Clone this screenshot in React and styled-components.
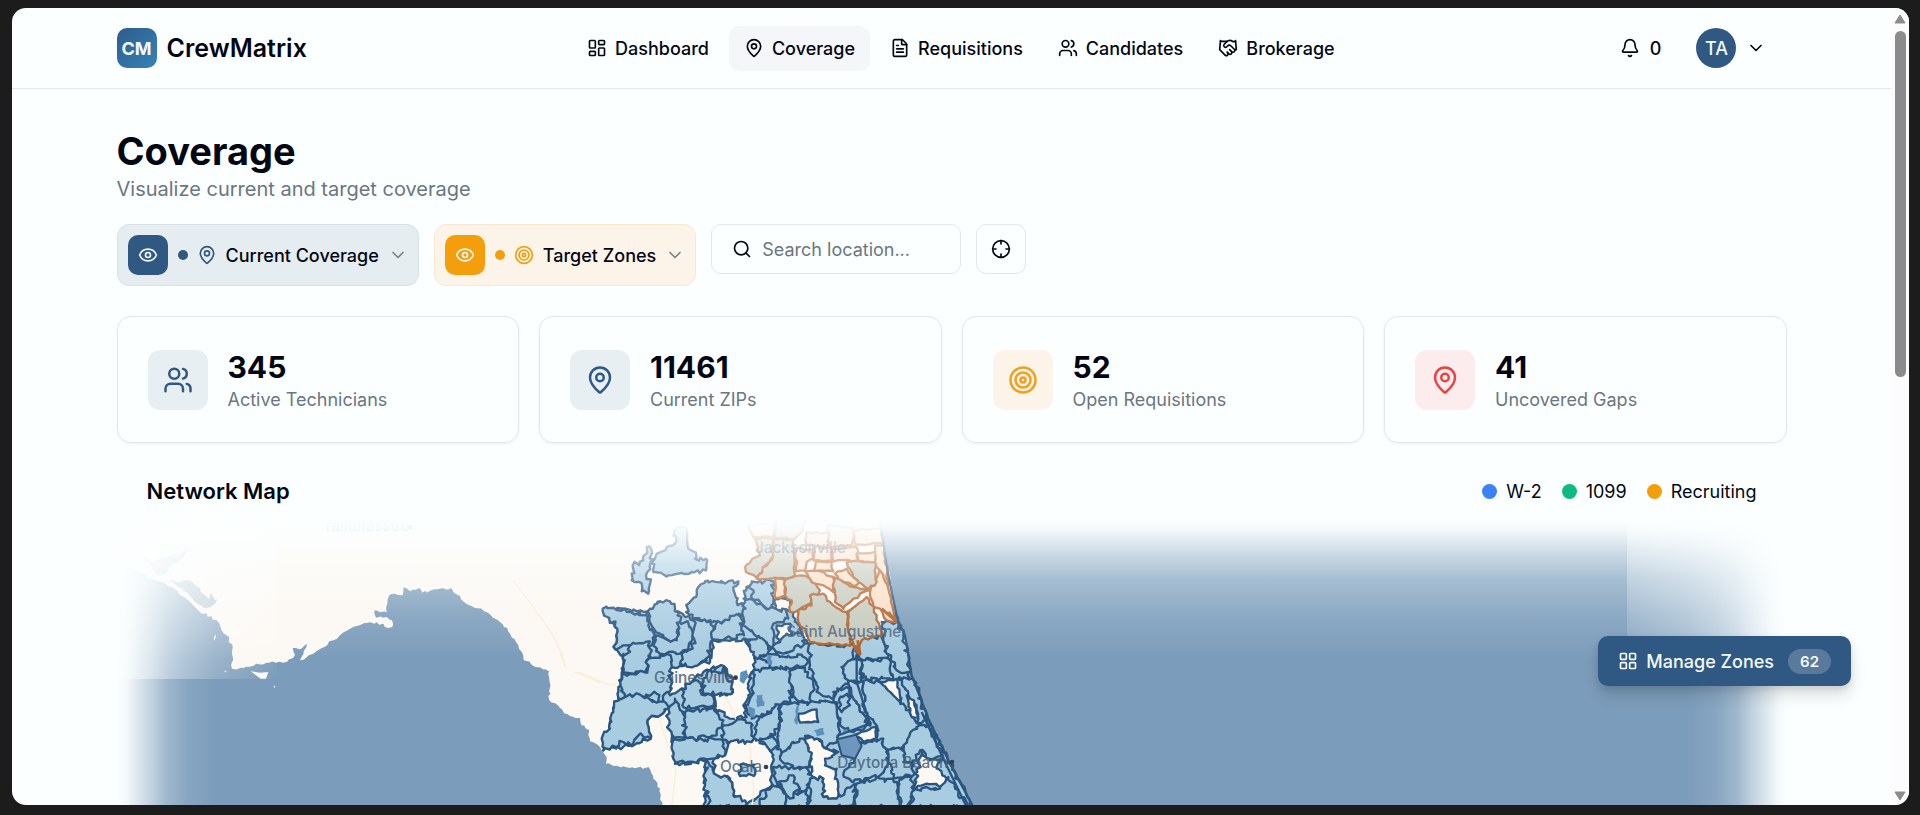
import React from 'react';
import styled, { createGlobalStyle } from 'styled-components';
import {
    LayoutDashboard,
    MapPin,
    FileText,
    Users,
    Handshake,
    Bell,
    ChevronDown,
    Eye,
    Target,
    Search,
    Crosshair,
    LayoutGrid,
} from 'lucide-react';

const navItems = [
    { label: 'Dashboard', icon: LayoutDashboard },
    { label: 'Coverage', icon: MapPin, active: true },
    { label: 'Requisitions', icon: FileText },
    { label: 'Candidates', icon: Users },
    { label: 'Brokerage', icon: Handshake },
];

const layers = [
    { label: 'Current Coverage', icon: MapPin, color: '#2f5882', tint: '#e6edf1', line: '#d7e0e8' },
    { label: 'Target Zones', icon: Target, color: '#f59e0b', tint: '#fdf4e9', line: '#f8e8d2' },
];

const stats = [
    { value: '345', label: 'Active Technicians', icon: Users, color: '#2f5882', tint: '#e8eff3' },
    { value: '11461', label: 'Current ZIPs', icon: MapPin, color: '#2f5882', tint: '#e8eff3' },
    { value: '52', label: 'Open Requisitions', icon: Target, color: '#f0a01e', tint: '#fdf4e9' },
    { value: '41', label: 'Uncovered Gaps', icon: MapPin, color: '#e64545', tint: '#fdeced' },
];

const legend = [
    { label: 'W-2', color: '#3b82f6' },
    { label: '1099', color: '#10b981' },
    { label: 'Recruiting', color: '#f59e0b' },
];

/* ---------- map data ---------- */

// Coastline, from the panhandle round to the Atlantic side
const LAND = '51,-20 51,168 100,170 170,205 215,225 265,265 300,300 350,325 380,370 398,405 396,470 430,468 500,452 550,452 585,428 578,408 600,412 622,396 600,445 640,425 700,385 750,350 800,333 850,335 865,348 877,345 876,325 860,315 828,317 824,295 862,300 862,275 868,250 885,245 908,250 910,226 930,238 958,228 965,242 1010,232 1055,228 1060,240 1080,252 1105,278 1160,300 1200,330 1230,365 1255,400 1270,440 1300,462 1347,478 1348,565 1380,588 1410,612 1440,618 1445,640 1468,655 1470,688 1500,705 1520,735 1518,755 1590,768 1645,765 1660,800 1680,830 1685,890 2620,890 2545,760 2480,625 2430,500 2410,350 2390,310 2355,130 2330,-20';

const BAYS = [
    '120,125 165,150 185,140 215,130 240,128 260,108 250,140 215,160 195,190 170,190 150,160',
    '205,205 240,210 265,205 290,222 310,245 328,262 335,240 345,265 352,262 340,280 312,288 285,270 260,240',
];

const ISLANDS = [
    '452,478 480,482 505,480 498,500 482,500',
    '345,368 348,372 343,386 341,380',
    '372,480 380,474 377,481',
    '521,520 526,524 522,528',
];

// Outer border of the covered area, under the single zones
const COVERED = '130,290 195,290 270,300 300,268 350,300 400,325 500,325 550,310 560,225 640,208 700,300 740,395 890,400 985,330 1010,310 1050,500 1100,625 1170,755 1240,895 430,895 440,745 345,755 335,650 325,590 262,625 272,680 212,700 130,715 175,558 182,520 190,430 165,410 172,350';

const UNCOVERED = [
    '460,385 550,380 585,420 575,480 565,550 550,580 560,615 510,620 465,590 465,545 515,545 520,500 495,465 430,480 400,505 365,530 330,550 330,465 450,450',
    '500,690 600,680 640,730 635,820 600,850 560,880 520,850 510,800 465,790 460,745 495,730',
    '730,680 770,675 800,710 835,720 795,740 795,760 830,770 830,860 790,855 790,800 750,800 755,740 740,700',
    '1085,720 1110,745 1150,740 1130,770 1160,800 1140,825 1100,815 1062,830 1072,780',
    '650,340 690,335 690,370 655,390',
    '645,262 690,265 695,300 645,290',
];

const BLUE_ZONES = [
    '345,50 380,50 385,110 400,118 405,140 438,140 438,175 395,180 325,190 280,180 275,155 290,125 320,105 345,95',
    '260,105 275,115 272,150 262,180 270,215 265,245 245,238 238,210 215,205 218,160 250,145',
    '435,208 535,208 520,225 530,270 558,290 550,310 515,312 490,328 420,325 378,300 385,275 408,255 410,235',
    '575,208 640,208 640,290 620,290 575,260 580,235 560,225',
    '555,265 575,262 620,292 680,292 685,320 640,335 640,380 635,410 600,378 575,355 545,340 550,315',
    '128,290 195,290 225,308 270,305 265,340 285,370 275,400 220,400 165,410 172,350',
    '270,290 300,268 330,268 345,290 358,300 360,330 350,385 325,385 285,360 268,325',
    '358,330 385,333 398,380 385,412 360,425 300,425 280,400 290,370 325,385 350,385',
    '400,325 440,330 462,345 460,380 450,415 440,445 405,462 360,455 365,425 398,410 402,380',
    '465,345 510,312 545,312 545,345 552,370 515,380 455,378',
    '555,380 600,378 632,412 620,430 590,440 570,400',
    '220,392 270,388 268,430 262,480 190,482 188,440',
    '265,432 332,430 335,460 328,540 300,572 290,545 195,555 182,520 190,485 262,482',
    '175,558 240,548 290,572 310,568 325,590 262,625 272,680 240,665 212,700 190,690 130,715 125,680 150,650 160,600',
    '365,530 400,505 425,520 425,548 460,555 462,585 370,585',
    '430,500 450,475 480,465 495,468 500,500 518,510 515,545 430,545',
    '375,600 460,588 490,625 470,670 380,682 370,640',
    '325,590 345,560 370,600 375,670 345,680 325,650',
    '340,682 480,682 495,730 440,742 345,755',
    '490,640 545,622 578,640 575,690 490,685',
    '580,475 690,468 692,570 650,580 620,610 575,620 555,580 572,555',
    '640,400 680,365 725,365 735,395 700,415 650,425',
    '600,430 660,435 725,428 745,450 720,465 640,468',
    '692,475 735,468 760,520 745,575 720,570 695,545',
    '750,395 880,400 885,450 845,465 865,505 820,560 770,540 750,460',
    '590,630 660,578 655,650 620,680 585,680',
    '665,578 820,570 840,630 835,680 800,710 770,680 735,672 700,720 660,735 655,690',
    '845,465 890,430 905,445 905,508 865,505',
    '905,445 985,440 1000,500 905,500',
    '898,378 965,372 985,435 915,445 890,420',
    '965,330 1010,330 1030,365 1050,480 1010,475 975,400',
    '905,508 970,510 1030,575 1080,640 1060,670 1030,710 980,712 950,680 950,640 915,600',
    '820,540 860,525 890,570 930,640 880,660 840,640',
    '865,508 905,508 915,600 930,640 890,570',
    '1018,495 1060,500 1100,625 1070,630 1070,580 1045,550',
    '1080,640 1110,640 1150,735 1115,742 1080,715 1060,760 1030,750 1030,700',
    '900,690 970,680 985,750 960,790 880,810 850,790 885,740',
    '440,745 462,785 510,800 520,850 555,865 555,885 450,885 435,820',
    '600,860 640,820 680,850 680,885 600,885',
    '600,680 640,672 655,705 630,715',
    '640,765 740,768 755,790 740,830 690,850 650,810',
    '660,735 700,690 730,680 750,720 750,765 700,770',
    '750,800 790,800 790,855 830,860 885,815 885,885 745,885',
    '890,815 960,800 1010,810 1015,885 890,885',
    '1020,800 1055,795 1062,835 1040,885 1020,885',
    '1062,835 1100,825 1140,830 1165,795 1225,885 1050,885',
    '980,712 1030,712 1030,750 1060,760 1060,790 1000,800 985,750',
    '540,758 582,758 582,792 540,792',
    '680,850 740,835 745,885 680,885',
    '452,472 478,462 492,462 492,482 455,482',
    '838,560 862,545 870,580 845,600',
    '655,810 700,790 720,830 690,860',
];

const HOLES = [
    '715,605 745,598 770,592 775,630 720,632',
    '960,510 1012,500 1020,570 1000,550',
    '1040,550 1062,565 1075,615 1055,615',
    '885,668 950,645 948,678 910,690',
];

const LAKES = [
    '590,550 608,548 612,582 590,585',
    '560,580 585,592 585,615 572,615',
    '542,480 560,474 566,492 552,515 540,508',
    '620,425 635,430 635,458 622,455',
    '762,655 790,648 794,668 770,672',
    '708,590 716,580 712,640 704,630',
    '845,650 865,655 850,668',
    '860,295 880,290 885,320 868,335',
];

const TAN_ZONES = [
    '585,80 640,80 640,130 590,197 558,180 560,158 600,130',
    '640,80 700,80 705,190 680,200 590,200 640,130',
    '675,205 720,190 750,200 780,235 750,275 715,295 690,300 695,265 675,250',
    '715,295 755,280 750,250 790,245 820,280 860,300 865,350 870,402 750,390 735,350 715,330',
    '865,300 920,255 950,310 965,370 905,385 895,425 865,360',
    '820,195 880,225 925,235 880,260 850,290 825,270',
    '860,150 945,150 950,210 925,232 880,195',
    '645,25 740,25 725,60 705,80 645,78',
];

const PEACH_ZONES = [
    '565,40 640,30 640,75 580,75',
    '645,200 675,205 675,250 645,258',
    '708,110 760,110 760,140 740,150 735,175 708,178',
    '768,148 815,148 820,178 762,178',
    '735,178 790,180 820,195 820,240 790,220 760,215',
    '740,60 805,60 805,105 740,100',
    '805,40 880,45 875,100 805,105',
    '880,55 965,50 970,95 885,98',
    '760,105 815,110 815,145 760,145',
    '815,110 890,105 895,145 820,148',
    '890,125 945,120 945,150 895,148',
    '825,185 860,170 900,210 880,222 835,205',
    '930,240 958,175 985,230 1008,330 980,325 960,290 940,285',
    '945,100 972,98 985,220 960,175 945,150',
];

const ROADS = [
    'M1240 205C1300 290 1350 340 1385 425L1395 465M1425 480L1500 512',
    'M1380 420L1395 460M1430 480C1500 500 1520 530 1560 512',
    'M1675 600C1690 700 1740 740 1725 800L1715 885',
    'M1870 550C1900 580 1890 600 1910 625M1950 690C1950 760 1970 830 1955 885',
];

const cities = [
    { name: 'Tallahassee', x: 668, y: 58, dot: [930, 45] },
    { name: 'Jacksonville', x: 1965, y: 122 },
    { name: 'Saint Augustine', x: 2058, y: 374 },
    { name: 'Gainesville', x: 1662, y: 512, dot: [1907, 497] },
    { name: 'Ocala', x: 1860, y: 780, dot: [1998, 765] },
    { name: 'Daytona Beach', x: 2212, y: 767, dot: [2556, 750] },
];

// Breaks the straight sides of an outline into small uneven steps. The offset depends
// only on the position, so that two zones sharing a side get the same border.
const noise = (x, y) => {
    const n = Math.sin(x * 12.9898 + y * 78.233) * 43758.5453;
    return (n - Math.floor(n)) * 2 - 1;
};

const rough = (outline, step = 9, amount = 7) => {
    const pts = outline.split(' ').map((p) => p.split(',').map(Number));
    const out = [];
    pts.forEach(([x1, y1], i) => {
        const [x2, y2] = pts[(i + 1) % pts.length];
        const count = Math.max(1, Math.min(60, Math.round(Math.hypot(x2 - x1, y2 - y1) / step)));
        out.push(`${x1},${y1}`);
        for (let k = 1; k < count; k += 1) {
            const x = x1 + ((x2 - x1) * k) / count;
            const y = y1 + ((y2 - y1) * k) / count;
            out.push(`${(x + noise(x, y) * amount).toFixed(1)},${(y + noise(y, x) * amount).toFixed(1)}`);
        }
    });
    return out.join(' ');
};

const CoverageMap = () => (
    <MapSvg viewBox="51 -9 5010 1830" preserveAspectRatio="xMidYMin slice" role="img" aria-label="Map of covered zones">
        <rect x="0" y="-20" width="5200" height="1900" fill="#7b9cba" />
        <polygon points={rough(LAND, 10, 4)} fill="#fcf8f3" />
        {BAYS.map((p) => <polygon key={p} points={rough(p, 10, 3)} fill="#a9bccb" />)}
        {ISLANDS.map((p) => <polygon key={p} points={p} fill="#fcf8f3" />)}
        <g transform="translate(1380 0)" stroke="#2a557f" strokeWidth="7" strokeLinejoin="round">
            <polygon points={rough(COVERED)} fill="#a8cce0" />
            {UNCOVERED.map((p) => <polygon key={p} points={rough(p)} fill="#fcf8f3" />)}
        </g>
        {ROADS.map((d) => <path key={d} d={d} fill="none" stroke="#fbeed6" strokeWidth="4" />)}
        <g transform="translate(1380 0)" strokeLinejoin="round">
            {BLUE_ZONES.map((p) => (
                <polygon key={p} points={rough(p)} fill="#a8cce0" stroke="#2a557f" strokeWidth="7" />
            ))}
            {HOLES.map((p) => (
                <polygon key={p} points={rough(p, 12, 3)} fill="#fcf8f3" stroke="#2a557f" strokeWidth="7" />
            ))}
            <polygon points="832,682 888,668 905,702 885,740 845,730" fill="#6f97bd" stroke="#2a557f" strokeWidth="6" />
            {LAKES.map((p) => <polygon key={p} points={rough(p, 8, 3)} fill="#5c90bd" />)}
            {PEACH_ZONES.map((p) => (
                <polygon key={p} points={rough(p, 14, 4)} fill="#fcdfc4" stroke="#b9652f" strokeWidth="7" />
            ))}
            {TAN_ZONES.map((p) => (
                <polygon key={p} points={rough(p, 12, 4)} fill="#c6cabd" stroke="#b0622f" strokeWidth="7" />
            ))}
            <path d="M885 400L900 425L893 385M965 290L1005 325L985 300" fill="none" stroke="#a8632f" strokeWidth="9" />
            <path d="M960 30L985 190L1012 320L1035 370L1055 490L1105 620L1170 755L1240 885" fill="none" stroke="#2a557f" strokeWidth="7" />
            <path d="M1085 600L1150 740L1220 885M890 425V510L930 635L830 672" fill="none" stroke="#2a557f" strokeWidth="7" />
        </g>
        {cities.map((c) => (
            <g key={c.name}>
                <CityName x={c.x} y={c.y}>{c.name}</CityName>
                {c.dot && <circle cx={c.dot[0]} cy={c.dot[1]} r="7" fill="#3a3f46" />}
            </g>
        ))}
    </MapSvg>
);

const App = () => {
    return (
        <>
            <GlobalStyle />
            <Desktop>
                <Window>
                    <Page>
                        <Header>
                            <Container>
                                <HeaderRow>
                                    <Brand href="#">
                                        <Logo>CM</Logo>
                                        CrewMatrix
                                    </Brand>
                                    <Nav>
                                        {navItems.map(({ label, icon: Icon, active }) => (
                                            <NavLink href="#" key={label} $active={active}>
                                                <Icon size={20} />
                                                {label}
                                            </NavLink>
                                        ))}
                                    </Nav>
                                    <Account>
                                        <PlainButton aria-label="Notifications">
                                            <Bell size={20} />
                                            0
                                        </PlainButton>
                                        <PlainButton aria-label="Account">
                                            <Avatar>TA</Avatar>
                                            <ChevronDown size={20} />
                                        </PlainButton>
                                    </Account>
                                </HeaderRow>
                            </Container>
                        </Header>

                        <Container>
                            <Title>Coverage</Title>
                            <Subtitle>Visualize current and target coverage</Subtitle>

                            <Toolbar>
                                {layers.map(({ label, icon: Icon, color, tint, line }) => (
                                    <LayerChip key={label} $tint={tint} $line={line}>
                                        <EyeButton aria-label={`Toggle ${label}`} $color={color}>
                                            <Eye size={20} />
                                        </EyeButton>
                                        <LayerButton $color={color}>
                                            <Dot $size={10} $color={color} />
                                            <Icon size={20} />
                                            <span>{label}</span>
                                            <Caret size={20} />
                                        </LayerButton>
                                    </LayerChip>
                                ))}
                                <SearchBox>
                                    <Search size={20} />
                                    <input type="text" aria-label="Search location" placeholder="Search location..." />
                                </SearchBox>
                                <SquareButton aria-label="Use my location">
                                    <Crosshair size={20} />
                                </SquareButton>
                            </Toolbar>

                            <Stats>
                                {stats.map(({ value, label, icon: Icon, color, tint }) => (
                                    <StatCard key={label}>
                                        <StatIcon $color={color} $tint={tint}>
                                            <Icon size={30} />
                                        </StatIcon>
                                        <div>
                                            <StatValue>{value}</StatValue>
                                            <StatLabel>{label}</StatLabel>
                                        </div>
                                    </StatCard>
                                ))}
                            </Stats>

                            <MapHeader>
                                <h2>Network Map</h2>
                                <Legend>
                                    {legend.map((item) => (
                                        <li key={item.label}>
                                            <Dot $size={15} $color={item.color} />
                                            {item.label}
                                        </li>
                                    ))}
                                </Legend>
                            </MapHeader>
                            <MapFrame>
                                <CoverageMap />
                                <EdgeFade $side="right" />
                                <EdgeFade $side="left" />
                                <EdgeFade $side="bottom" />
                                <CornerFade $side="left" />
                                <CornerFade $side="right" />
                            </MapFrame>
                        </Container>
                    </Page>

                    <ScrollTrack>
                        <ScrollArrow viewBox="0 0 12 10"><path d="M6 1L11 9H1Z" /></ScrollArrow>
                        <ScrollLane><ScrollThumb /></ScrollLane>
                        <ScrollArrow viewBox="0 0 12 10"><path d="M6 9L11 1H1Z" /></ScrollArrow>
                    </ScrollTrack>

                    <ManageButton>
                        <LayoutGrid size={20} />
                        Manage Zones
                        <Count>62</Count>
                    </ManageButton>
                </Window>
            </Desktop>
        </>
    );
};

const GlobalStyle = createGlobalStyle`
    * {
        box-sizing: border-box;
    }

    body {
        margin: 0;
        background: #1c1c1c;
        color: #030712;
        font-family: Inter, "Liberation Sans", sans-serif;
        font-size: 18px;
        line-height: 25px;
    }

    h1, h2, p, ul {
        margin: 0;
        padding: 0;
    }

    button, input {
        border: 0;
        padding: 0;
        background: none;
        color: inherit;
        font: inherit;
    }

    button {
        cursor: pointer;
    }

    a {
        color: inherit;
        text-decoration: none;
    }

    svg {
        flex-shrink: 0;
    }
`;

const Desktop = styled.div`
    height: 100vh;
    padding: 8px 11px 10px 12px;
`;

const Window = styled.div`
    position: relative;
    display: flex;
    height: 100%;
    overflow: hidden;
    border-radius: 14px;
    background: #fcffff;
`;

const Page = styled.div`
    flex: 1;
    min-width: 0;
    overflow: hidden;
`;

const Container = styled.div`
    max-width: 1750px;
    margin: 0 auto;
    padding: 0 40px;
`;

const Header = styled.header`
    border-bottom: 1px solid #e2e7ea;
    margin-bottom: 40px;
`;

const HeaderRow = styled.div`
    display: flex;
    align-items: center;
    justify-content: space-between;
    height: 80px;
`;

const Brand = styled.a`
    display: flex;
    align-items: center;
    gap: 10px;
    padding-right: 10px;
    font-size: 25px;
    font-weight: 600;
`;

const Logo = styled.span`
    display: flex;
    align-items: center;
    justify-content: center;
    width: 40px;
    height: 40px;
    border-radius: 10px;
    background: linear-gradient(135deg, #2f5b8c, #3484b8);
    color: #f4f9fc;
    font-size: 18px;
    font-weight: 700;
`;

const Nav = styled.nav`
    display: flex;
    gap: 5px;
`;

const NavLink = styled.a`
    display: flex;
    align-items: center;
    gap: 8px;
    height: 45px;
    padding: 0 15px;
    border-radius: 10px;
    background: ${(props) => (props.$active ? '#f4f6f9' : 'transparent')};
    font-weight: 500;
`;

const Account = styled.div`
    display: flex;
    align-items: center;
`;

const PlainButton = styled.button`
    display: flex;
    align-items: center;
    gap: 10px;
    padding: 0 20px 0 15px;
    font-weight: 500;
`;

const Avatar = styled.span`
    display: flex;
    align-items: center;
    justify-content: center;
    width: 40px;
    height: 40px;
    border-radius: 50%;
    background: #2f5882;
    color: #f4f9fc;
`;

const Title = styled.h1`
    font-size: 38px;
    font-weight: 700;
    line-height: 45px;
`;

const Subtitle = styled.p`
    margin-bottom: 20px;
    color: #6b7680;
    font-size: 20px;
    line-height: 30px;
`;

const Toolbar = styled.div`
    display: flex;
    align-items: flex-start;
    gap: 15px;
    margin-bottom: 30px;
`;

const LayerChip = styled.div`
    display: flex;
    align-items: center;
    gap: 10px;
    padding: 10px;
    border: 1px solid ${(props) => props.$line};
    border-radius: 12px;
    background: ${(props) => props.$tint};
`;

const EyeButton = styled.button`
    display: flex;
    align-items: center;
    justify-content: center;
    width: 40px;
    height: 40px;
    border-radius: 10px;
    background: ${(props) => props.$color};
    color: #f4f9fc;
`;

const LayerButton = styled.button`
    display: flex;
    align-items: center;
    gap: 9px;
    color: ${(props) => props.$color};
    font-weight: 500;

    span {
        color: #030712;
    }
`;

const Caret = styled(ChevronDown)`
    color: #7b858c;
`;

const Dot = styled.i`
    flex-shrink: 0;
    width: ${(props) => props.$size}px;
    height: ${(props) => props.$size}px;
    border-radius: 50%;
    background: ${(props) => props.$color};
`;

const SearchBox = styled.label`
    display: flex;
    align-items: center;
    gap: 10px;
    width: 250px;
    height: 50px;
    padding: 0 20px;
    border: 1px solid #e2e7ea;
    border-radius: 10px;

    input {
        flex: 1;
        min-width: 0;
        outline: none;
    }

    input::placeholder {
        color: #6b7680;
        opacity: 1;
    }
`;

const SquareButton = styled.button`
    display: flex;
    align-items: center;
    justify-content: center;
    width: 50px;
    height: 50px;
    border: 1px solid #e2e7ea;
    border-radius: 10px;
`;

const Stats = styled.div`
    display: grid;
    grid-template-columns: repeat(4, 1fr);
    gap: 20px;
    margin-bottom: 30px;
`;

const StatCard = styled.div`
    display: flex;
    align-items: center;
    gap: 20px;
    padding: 30px;
    border: 1px solid #e2e7ea;
    border-radius: 14px;
    box-shadow: 0 1px 3px rgba(0, 0, 0, 0.06);
`;

const StatIcon = styled.div`
    display: flex;
    align-items: center;
    justify-content: center;
    width: 60px;
    height: 60px;
    border-radius: 12px;
    background: ${(props) => props.$tint};
    color: ${(props) => props.$color};
`;

const StatValue = styled.p`
    font-size: 30px;
    font-weight: 700;
    line-height: 40px;
`;

const StatLabel = styled.p`
    color: #6b7680;
    line-height: 25px;
`;

const MapHeader = styled.div`
    display: flex;
    align-items: center;
    justify-content: space-between;
    padding: 0 30px;

    h2 {
        font-size: 22px;
        font-weight: 600;
        line-height: 36px;
    }
`;

const Legend = styled.ul`
    display: flex;
    gap: 20px;
    list-style: none;

    li {
        display: flex;
        align-items: center;
        gap: 9px;
    }
`;

const MapFrame = styled.div`
    position: relative;
    height: 610px;
    overflow: hidden;
`;

const MapSvg = styled.svg`
    display: block;
    width: 100%;
    height: 100%;
`;

const CityName = styled.text`
    fill: #46607a;
    font-size: 46px;
    font-weight: 500;
    opacity: 0.85;
`;

const fadeStops = `
    #fcffff 0,
    rgba(252, 255, 255, 0.92) 10px,
    rgba(252, 255, 255, 0.52) 36px,
    rgba(252, 255, 255, 0.28) 50px,
    rgba(252, 255, 255, 0.1) 70px,
    rgba(252, 255, 255, 0) 100px
`;

const topStops = `
    #fcffff 10px,
    rgba(252, 255, 255, 0.94) 20px,
    rgba(252, 255, 255, 0.56) 50px,
    rgba(252, 255, 255, 0.34) 70px,
    rgba(252, 255, 255, 0.14) 105px,
    rgba(252, 255, 255, 0) 150px
`;

const EdgeFade = styled.div`
    position: absolute;
    inset: 0;
    pointer-events: none;
    background: linear-gradient(
        ${(props) => (props.$side === 'right' ? 'to left' : props.$side === 'left' ? 'to right' : 'to bottom')},
        ${(props) => (props.$side === 'bottom' ? topStops : fadeStops)}
    );
`;

const CornerFade = styled.div`
    position: absolute;
    top: 10px;
    ${(props) => props.$side}: 0;
    width: 160px;
    height: 160px;
    pointer-events: none;
    background: linear-gradient(
        to bottom ${(props) => (props.$side === 'left' ? 'right' : 'left')},
        #fcffff,
        rgba(252, 255, 255, 0)
    );
`;

const ScrollTrack = styled.div`
    display: flex;
    flex-direction: column;
    align-items: center;
    gap: 7px;
    width: 18px;
    padding: 6px 0 4px;
    background: #fcfcfc;
`;

const ScrollArrow = styled.svg`
    width: 12px;
    height: 10px;
    fill: #8b8b8b;
    stroke: #8b8b8b;
    stroke-linejoin: round;
`;

const ScrollLane = styled.div`
    flex: 1;
`;

const ScrollThumb = styled.div`
    width: 11px;
    height: 46%;
    border-radius: 6px;
    background: #8b8b8b;
`;

const ManageButton = styled.button`
    position: absolute;
    right: 58px;
    bottom: 119px;
    display: flex;
    align-items: center;
    gap: 8px;
    height: 50px;
    padding: 0 20px;
    border-radius: 10px;
    background: #2f5882;
    box-shadow: 0 10px 16px rgba(0, 0, 0, 0.12), 0 3px 6px rgba(0, 0, 0, 0.1);
    color: #f4f9fc;
    font-weight: 500;
`;

const Count = styled.span`
    margin-left: 6px;
    padding: 0 12px;
    border-radius: 13px;
    background: #5a7a9c;
    font-size: 15px;
    font-weight: 600;
`;

export default App;
